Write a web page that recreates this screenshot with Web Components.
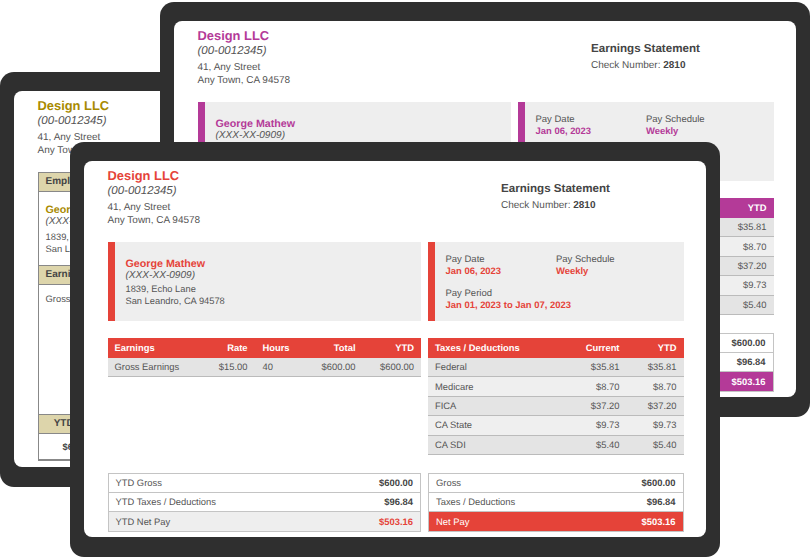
<!DOCTYPE html>
<html lang="en">
<head>
<meta charset="utf-8">
<title>Earnings Statement</title>
<style>
  html, body { margin: 0; padding: 0; background: #fff; }
  body { width: 810px; height: 558px; position: relative; overflow: hidden; font-family: "Liberation Sans", Arial, sans-serif; text-rendering: geometricPrecision; }
</style>
</head>
<body>
<!-- the two back sheets only carry the texts that still show past the front ones -->
<pay-frame x="0" y="72" accent="#a88a00">
  <pay-head no-statement></pay-head>
  <classic-body></classic-body>
</pay-frame>

<pay-frame x="160" y="2" accent="#b43a98">
  <pay-head></pay-head>
  <pay-info partial></pay-info>
  <pay-tables partial></pay-tables>
  <pay-totals partial></pay-totals>
</pay-frame>

<pay-frame x="70" y="142" accent="#e54339">
  <pay-head></pay-head>
  <pay-info></pay-info>
  <pay-tables></pay-tables>
  <pay-totals></pay-totals>
</pay-frame>

<script>
class PayFrame extends HTMLElement {
  constructor() {
    super();
    this.attachShadow({ mode: "open" });
  }

  connectedCallback() {
    this.style.left = this.getAttribute("x") + "px";
    this.style.top = this.getAttribute("y") + "px";
    this.style.setProperty("--accent", this.getAttribute("accent"));
    this.shadowRoot.innerHTML = `
      <style>
        :host {
          display: block;
          position: absolute;
          width: 650px;
          height: 415px;
          box-sizing: border-box;
          padding: 19px 14px 20px;
          background: #2f2f2f;
          border-radius: 14px;
        }
        .sheet {
          height: 100%;
          box-sizing: border-box;
          padding: 8px 22.5px 0 23.5px;
          background: #fff;
          border-radius: 8px;
          display: flex;
          flex-direction: column;
          overflow: hidden;
        }
      </style>
      <div class="sheet"><slot></slot></div>
    `;
  }
}
customElements.define("pay-frame", PayFrame);

class PayHead extends HTMLElement {
  constructor() {
    super();
    this.attachShadow({ mode: "open" });
  }

  connectedCallback() {
    const statement = this.hasAttribute("no-statement")
      ? ""
      : `<h2>Earnings Statement</h2>
         <div class="check">Check Number: <b>2810</b></div>`;
    this.shadowRoot.innerHTML = `
      <style>
        :host {
          display: grid;
          grid-template-columns: 393.5px 1fr;
          height: 73px;
          color: #555;
          font-size: 10px;
        }
        h1 { margin: 0 0 1px; color: var(--accent); font-size: 12.9px; line-height: 14px; font-weight: bold; }
        .ein { font-style: italic; font-size: 11.5px; line-height: 14px; margin-bottom: 4px; }
        .addr { line-height: 12.8px; }
        .right { padding-top: 13px; }
        h2 { margin: 0 0 4px; color: #444; font-size: 11.6px; line-height: 14px; font-weight: bold; }
        .check { line-height: 12px; }
        b { color: #444; }
      </style>
      <div>
        <h1>Design LLC</h1>
        <div class="ein">(00-0012345)</div>
        <div class="addr">41, Any Street<br>Any Town, CA 94578</div>
      </div>
      <div class="right">${statement}</div>
    `;
  }
}
customElements.define("pay-head", PayHead);

class PayInfo extends HTMLElement {
  constructor() {
    super();
    this.attachShadow({ mode: "open" });
  }

  connectedCallback() {
    const partial = this.hasAttribute("partial");
    this.shadowRoot.innerHTML = `
      <style>
        :host {
          display: grid;
          grid-template-columns: 313.5px 255.5px;
          gap: 7px;
          height: 79px;
          color: #555;
          font-size: 9.5px;
          line-height: 12px;
        }
        .panel { background: #eee; border-left: 7px solid var(--accent); }
        .emp { padding: 16px 0 0 11px; }
        .name { color: var(--accent); font-weight: bold; font-size: 10.7px; }
        .ssn { font-style: italic; font-size: 10.1px; margin-bottom: 2px; }
        .addr { line-height: 11.5px; font-size: 9.3px; }
        .pay { padding: 12px 0 0 10.5px; display: grid; grid-template-columns: 110.5px 1fr; grid-auto-rows: 23px; row-gap: 11px; }
        .pay strong { display: block; color: var(--accent); font-size: 9.45px; line-height: 11px; }
        .wide { grid-column: 1 / 3; }
      </style>
      <div class="panel emp">
        <div class="name">George Mathew</div>
        <div class="ssn">(XXX-XX-0909)</div>
        ${partial ? "" : `<div class="addr">1839, Echo Lane<br>San Leandro, CA 94578</div>`}
      </div>
      <div class="panel pay">
        <div>Pay Date<strong>Jan 06, 2023</strong></div>
        <div>Pay Schedule<strong>Weekly</strong></div>
        ${partial ? "" : `<div class="wide">Pay Period<strong>Jan 01, 2023 to Jan 07, 2023</strong></div>`}
      </div>
    `;
  }
}
customElements.define("pay-info", PayInfo);

class PayTables extends HTMLElement {
  constructor() {
    super();
    this.attachShadow({ mode: "open" });
  }

  connectedCallback() {
    const partial = this.hasAttribute("partial");
    const earnings = partial ? [] : [["Gross Earnings", "$15.00", "40", "$600.00", "$600.00"]];
    const taxes = [
      ["Federal", "$35.81", "$35.81"],
      ["Medicare", "$8.70", "$8.70"],
      ["FICA", "$37.20", "$37.20"],
      ["CA State", "$9.73", "$9.73"],
      ["CA SDI", "$5.40", "$5.40"],
    ];
    const row = (cells) =>
      cells.map((c, i) => `<span>${partial && i < cells.length - 1 ? "" : c}</span>`).join("");

    this.shadowRoot.innerHTML = `
      <style>
        :host {
          display: grid;
          grid-template-columns: 313.5px 255.5px;
          gap: 7px;
          margin-top: 17px;
          height: 117px;
          color: #555;
          font-size: 9.4px;
        }
        .row { display: grid; height: 19.4px; align-items: center; box-sizing: border-box; background: #efefef; border-bottom: 1px solid #bbb; }
        .row:nth-child(even) { background: #e4e4e4; }
        .row span { padding: 0 7px 1px; text-align: right; }
        .row span:first-child { text-align: left; }
        .head { height: 20px; background: var(--accent) !important; border: 0; color: #fff; font-weight: bold; }
        .earn .row { grid-template-columns: 89px 58px 50px 58px 1fr; }
        .earn .row span:nth-child(3) { text-align: left; padding-left: 8px; }
        .tax .row { grid-template-columns: 1fr 57px 57px; }
      </style>
      <div class="earn">
        ${partial ? "" : `<div class="row head">${row(["Earnings", "Rate", "Hours", "Total", "YTD"])}</div>`}
        ${earnings.map((r) => `<div class="row">${row(r)}</div>`).join("")}
      </div>
      <div class="tax">
        <div class="row head">${row(["Taxes / Deductions", "Current", "YTD"])}</div>
        ${taxes.map((r) => `<div class="row">${row(r)}</div>`).join("")}
      </div>
    `;
  }
}
customElements.define("pay-tables", PayTables);

class PayTotals extends HTMLElement {
  constructor() {
    super();
    this.attachShadow({ mode: "open" });
  }

  connectedCallback() {
    const partial = this.hasAttribute("partial");
    const label = (text) => `<span>${partial ? "" : text}</span>`;
    const ytd = partial
      ? ""
      : `<div class="line"><span>YTD Gross</span><b>$600.00</b></div>
         <div class="line"><span>YTD Taxes / Deductions</span><b>$96.84</b></div>
         <div class="line soft"><span>YTD Net Pay</span><b>$503.16</b></div>`;
    this.shadowRoot.innerHTML = `
      <style>
        :host {
          display: grid;
          grid-template-columns: 313.5px 255.5px;
          gap: 7px;
          margin-top: 17.5px;
          color: #555;
          font-size: 9.4px;
        }
        .box { border: 1px solid #c4c4c4; }
        .line { display: flex; justify-content: space-between; align-items: center; height: 19.3px; box-sizing: border-box; padding: 0 7px 1px; border-bottom: 1px solid #c4c4c4; }
        .line:last-child { border-bottom: 0; }
        .line b { color: #444; }
        .soft { background: #eee; }
        .soft b { color: #e54339; }
        .net { background: var(--accent); color: #fff; }
        .net b { color: #fff; }
      </style>
      <div class="box">${ytd}</div>
      <div class="box">
        <div class="line">${label("Gross")}<b>$600.00</b></div>
        <div class="line">${label("Taxes / Deductions")}<b>$96.84</b></div>
        <div class="line net">${label("Net Pay")}<b>$503.16</b></div>
      </div>
    `;
  }
}
customElements.define("pay-totals", PayTotals);

// older layout of the sheet, only its left edge is seen
class ClassicBody extends HTMLElement {
  constructor() {
    super();
    this.attachShadow({ mode: "open" });
  }

  connectedCallback() {
    this.shadowRoot.innerHTML = `
      <style>
        :host {
          display: grid;
          grid-template-rows: 19px 74px 19px 130px 19px 26px;
          height: 289px;
          box-sizing: border-box;
          border: 1px solid #888;
          color: #555;
          font-size: 9.4px;
          line-height: 12px;
        }
        .bar { background: #ddd5ab; color: #444; font-weight: bold; font-size: 10px; line-height: 18px; padding: 0 7px; border-bottom: 1px solid #888; }
        .bar + div { border-bottom: 1px solid #888; }
        .emp { padding: 12px 7px 0; }
        .name { color: var(--accent); font-weight: bold; font-size: 10.7px; }
        .ssn { font-style: italic; font-size: 10.1px; margin-bottom: 3px; }
        .earn { padding: 8px 7px 0; }
        .ytd { display: grid; grid-template-columns: 82px 1fr; text-align: center; align-items: center; }
        .ytd.bar { padding: 0; }
        .val { font-weight: bold; color: #444; }
      </style>
      <div class="bar">Employee</div>
      <div class="emp">
        <div class="name">George Mathew</div>
        <div class="ssn">(XXX-XX-0909)</div>
        1839, Echo Lane<br>San Leandro, CA 94578
      </div>
      <div class="bar">Earnings</div>
      <div class="earn">Gross Earnings</div>
      <div class="bar ytd"><span>YTD Gross</span><span></span></div>
      <div class="ytd val"><span>$600.00</span><span></span></div>
    `;
  }
}
customElements.define("classic-body", ClassicBody);
</script>
</body>
</html>
